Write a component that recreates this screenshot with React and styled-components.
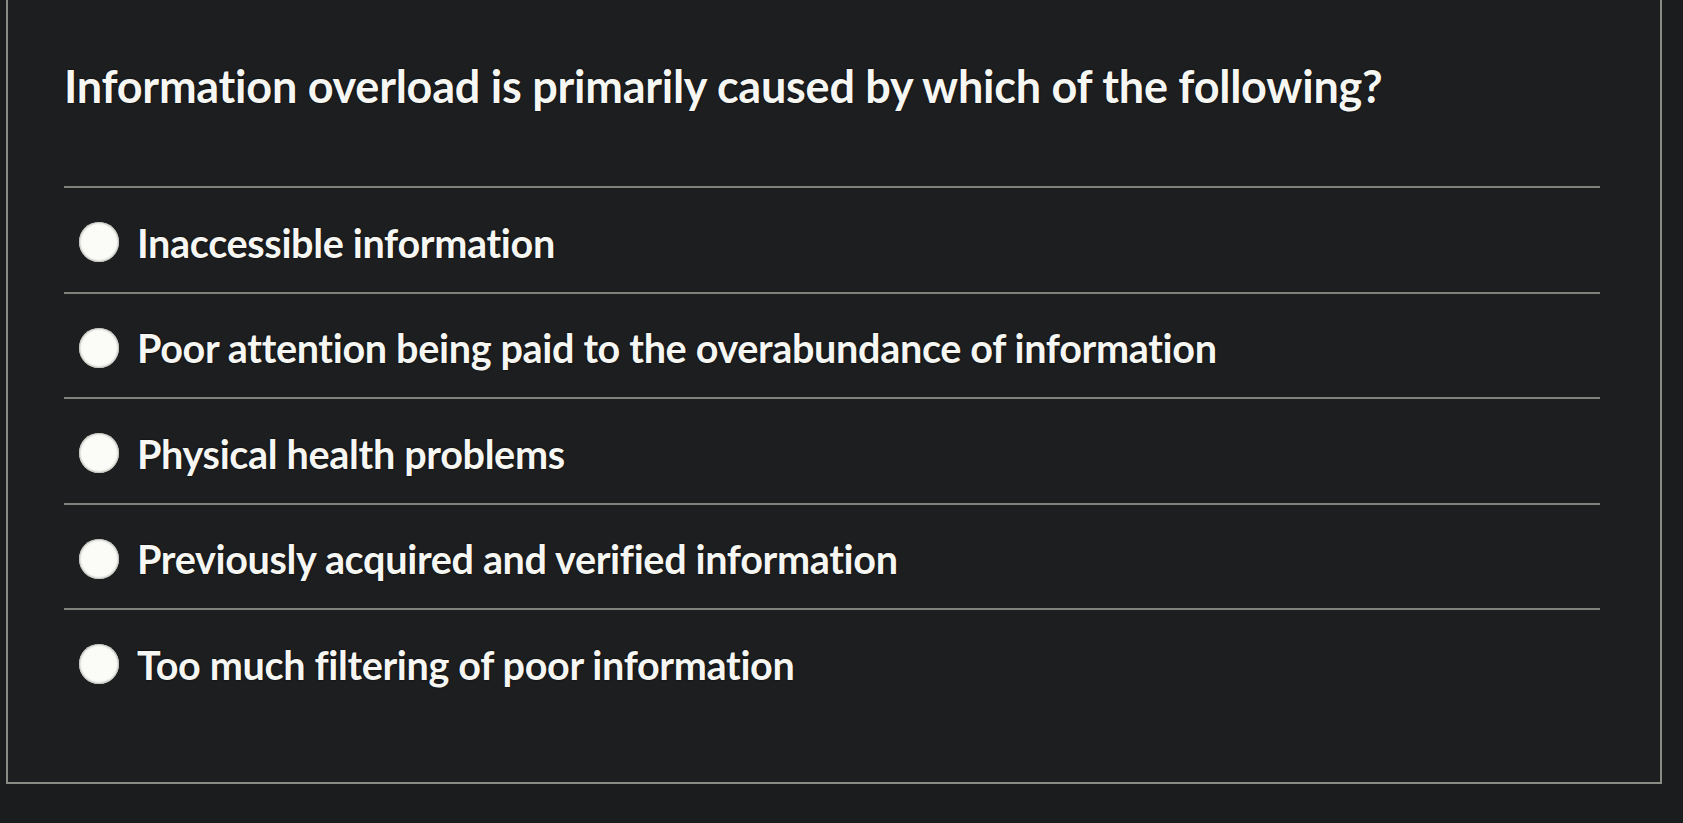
import React from "react";
import styled, { createGlobalStyle } from "styled-components";

const GlobalStyle = createGlobalStyle`
  html, body {
    margin: 0;
    padding: 0;
    background: #1b1c1e;
    overflow: hidden;
  }
  body {
    font-family: Lato, "Open Sans", "Liberation Sans", sans-serif;
    color: #f6f6f2;
  }
`;

const Page = styled.div`
  width: 1683px;
  height: 823px;
  background: #1b1c1e;
`;

const Panel = styled.div`
  box-sizing: border-box;
  margin-left: 6px;
  margin-top: -4px;
  width: 1656px;
  height: 788px;
  border: 2px solid #8a8b84;
  border-top: none;
  background: #1d1e20;
  padding: 0 60px 0 56px;
`;

const Question = styled.h1`
  margin: 0;
  padding-top: 68px;
  height: 190px;
  box-sizing: border-box;
  font-size: 45px;
  font-weight: 700;
  line-height: 1;
  letter-spacing: -0.25px;
  text-shadow: 0 0 2px rgba(0, 0, 0, 0.9);
`;

const Options = styled.ul`
  list-style: none;
  margin: 0;
  padding: 0;
`;

const Option = styled.li`
  display: flex;
  align-items: center;
  gap: 18px;
  box-sizing: border-box;
  height: 105.5px;
  padding: 5px 0 0 15px;
  border-top: 2px solid #80827b;
`;

const Radio = styled.span`
  flex: none;
  width: 40px;
  height: 40px;
  border-radius: 50%;
  background: #fbfbf7;
  box-shadow: inset 0 0 2px 1px #b9b9b4;
`;

const Label = styled.span`
  font-size: 39.6px;
  font-weight: 700;
  letter-spacing: -0.35px;
  text-shadow: 0 0 2px rgba(0, 0, 0, 0.9);
`;

const answers = [
  "Inaccessible information",
  "Poor attention being paid to the overabundance of information",
  "Physical health problems",
  "Previously acquired and verified information",
  "Too much filtering of poor information",
];

export default function App() {
  return (
    <Page>
      <GlobalStyle />
      <Panel>
        <Question>Information overload is primarily caused by which of the following?</Question>
        <Options>
          {answers.map((a) => (
            <Option key={a}>
              <Radio />
              <Label>{a}</Label>
            </Option>
          ))}
        </Options>
      </Panel>
    </Page>
  );
}
